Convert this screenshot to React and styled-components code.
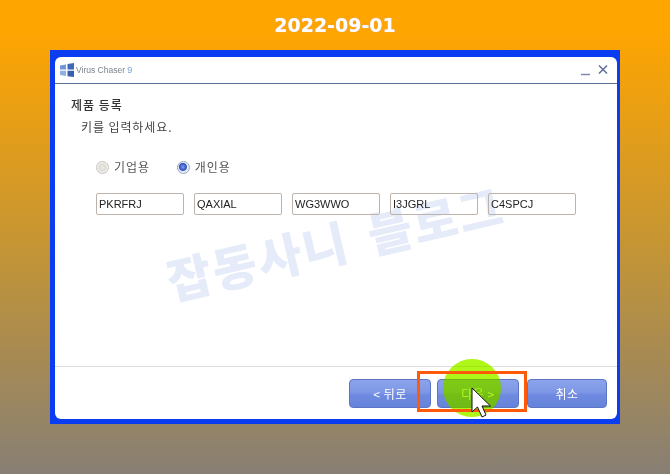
import styled, { createGlobalStyle } from 'styled-components';

const KOREAN = `"Noto Sans CJK KR", "Liberation Sans", sans-serif`;
const keys = ['PKRFRJ', 'QAXIAL', 'WG3WWO', 'I3JGRL', 'C4SPCJ'];

export default function App() {
    return (
        <Page>
            <GlobalStyle />
            <DateTitle>2022-09-01</DateTitle>
            <Frame>
                <Window>
                    <TitleBar>
                        <Logo viewBox="0 0 14 14">
                            <path d="M0 2.5 L6 1.5 V6.5 H0 Z" fill="#6f97d8" />
                            <path d="M7.5 1 L14 0 V6.5 H7.5 Z" fill="#3f68b8" />
                            <path d="M0 7.8 H6 V13 L0 12 Z" fill="#8fb0e4" />
                            <path d="M7.5 7.8 H14 V14 L7.5 13.2 Z" fill="#3560ae" />
                        </Logo>
                        <AppName>Virus Chaser <b>9</b></AppName>
                        <WindowIcons viewBox="0 0 30 14">
                            <path d="M1 11.5 H10" stroke="#7f8cab" strokeWidth="1.6" />
                            <path d="M19 2.5 L27 10.5 M27 2.5 L19 10.5" stroke="#5d6f96" strokeWidth="1.5" />
                        </WindowIcons>
                    </TitleBar>
                    <Body>
                        <Heading>제품 등록</Heading>
                        <Hint>키를 입력하세요.</Hint>
                        <RadioRow>
                            <RadioLabel>
                                <Radio />
                                기업용
                            </RadioLabel>
                            <RadioLabel>
                                <Radio $checked />
                                개인용
                            </RadioLabel>
                        </RadioRow>
                        <KeyRow>
                            {keys.map((k) => (
                                <KeyInput key={k}>{k}</KeyInput>
                            ))}
                        </KeyRow>
                        <Watermark>잡동사니 블로그</Watermark>
                    </Body>
                    <Footer>
                        <Button>&lt; 뒤로</Button>
                        <Button>다음 &gt;</Button>
                        <Button $cancel>취소</Button>
                    </Footer>
                </Window>
                <ClickSpot />
                <ClickBox />
                <Cursor viewBox="0 0 22 32">
                    <path d="M1 1 V25 L6.5 20 L11 30 L15 28 L11 19 L19.5 19 Z" fill="#fff" stroke="#111" strokeWidth="1" strokeLinejoin="round" />
                </Cursor>
            </Frame>
        </Page>
    );
}

const GlobalStyle = createGlobalStyle`
    html, body {
        margin: 0;
        padding: 0;
    }
`
const Page = styled.div`
    width: 670px;
    height: 474px;
    overflow: hidden;
    background: linear-gradient(180deg, #ffa500 0%, #ffa500 6%, #c79632 50%, #877f74 100%);
`
const DateTitle = styled.div`
    height: 50px;
    display: flex;
    align-items: center;
    justify-content: center;
    font-family: "DejaVu Sans", sans-serif;
    font-weight: 700;
    font-size: 19px;
    color: #fff;
    text-shadow: 0 0 1px #c9b4e8;
`
const Frame = styled.div`
    position: relative;
    width: 562px;
    height: 362px;
    margin-left: 50px;
    padding: 7px 3px 5px 5px;
    background: #0a3cf2;
`
const Window = styled.div`
    height: 100%;
    display: flex;
    flex-direction: column;
    background: #fff;
    border-radius: 6px;
    overflow: hidden;
`
const TitleBar = styled.div`
    height: 26px;
    flex: none;
    display: flex;
    align-items: center;
    padding: 0 7px 0 5px;
    border-bottom: 1px solid #5a7094;
`
const Logo = styled.svg`
    width: 14px;
    height: 14px;
    margin-right: 2px;
`
const AppName = styled.span`
    font-family: "Liberation Sans", sans-serif;
    font-size: 8.5px;
    color: #7a838c;
    b {
        color: #7d9fd8;
        font-size: 9px;
        font-weight: 400;
    }
`
const WindowIcons = styled.svg`
    width: 30px;
    height: 14px;
    margin-left: auto;
`
const Body = styled.div`
    position: relative;
    isolation: isolate;
    flex: 1;
    display: flex;
    flex-direction: column;
    padding: 13px 0 0 16px;
    font-family: ${KOREAN};
`
const Heading = styled.div`
    font-size: 12px;
    line-height: 16px;
    color: #333;
    font-weight: 500;
    letter-spacing: 1px;
`
const Hint = styled.div`
    margin: 6px 0 0 10px;
    font-size: 12px;
    line-height: 16px;
    color: #444;
    letter-spacing: 0.9px;
`
const RadioRow = styled.div`
    display: flex;
    gap: 27px;
    margin: 24px 0 0 25px;
`
const RadioLabel = styled.div`
    display: flex;
    align-items: center;
    gap: 5px;
    font-size: 12px;
    line-height: 16px;
    color: #555;
    letter-spacing: 0.9px;
`
const Radio = styled.span`
    width: 13px;
    height: 13px;
    box-sizing: border-box;
    border-radius: 50%;
    border: 1px solid ${(p) => (p.$checked ? '#9aa6c6' : '#c4c2bc')};
    background: ${(p) => (p.$checked
        ? 'radial-gradient(circle at 45% 45%, #7f9cf0 0, #2f50b8 3.5px, #e8ecf6 4.5px)'
        : 'radial-gradient(circle at 50% 50%, #ecebe6 0, #dcdad5 3.5px, #f5f4f0 5px)')};
`
const KeyRow = styled.div`
    display: flex;
    gap: 10px;
    margin: 18px 0 0 25px;
`
const KeyInput = styled.div`
    width: 88px;
    height: 22px;
    box-sizing: border-box;
    padding-left: 2px;
    border: 1px solid #bdb3aa;
    border-radius: 2px;
    font-family: "Liberation Sans", sans-serif;
    font-size: 11px;
    line-height: 20px;
    color: #222;
`
const Watermark = styled.div`
    position: absolute;
    z-index: -1;
    left: 108px;
    top: 129px;
    font-family: ${KOREAN};
    font-weight: 900;
    font-size: 48px;
    line-height: 56px;
    letter-spacing: 2px;
    word-spacing: 8px;
    white-space: nowrap;
    color: #e5ebf9;
    transform: rotate(-13deg);
`
const Footer = styled.div`
    height: 40px;
    flex: none;
    display: flex;
    justify-content: flex-end;
    gap: 6px;
    padding: 12px 10px 0 0;
    border-top: 1px solid #dcdcdc;
`
const Button = styled.div`
    width: ${(p) => (p.$cancel ? '80px' : '82px')};
    height: 29px;
    margin-left: ${(p) => (p.$cancel ? '2px' : '0')};
    box-sizing: border-box;
    display: flex;
    align-items: center;
    justify-content: center;
    border: 1px solid #5c74c4;
    border-radius: 4px;
    background: linear-gradient(180deg, #8ba3ea 0%, #7e98e6 45%, #6f8ae0 55%, #6583da 100%);
    font-family: ${KOREAN};
    font-size: 12px;
    letter-spacing: 0.5px;
    color: #fff;
`
const ClickSpot = styled.div`
    position: absolute;
    left: 393px;
    top: 309px;
    width: 58px;
    height: 58px;
    border-radius: 50%;
    background: rgba(170, 250, 0, 0.5);

    &::after {
        content: '';
        position: absolute;
        inset: 0;
        border-radius: 50%;
        background: rgb(210, 250, 50);
        mix-blend-mode: multiply;
    }
`
const ClickBox = styled.div`
    position: absolute;
    left: 367px;
    top: 321px;
    width: 104px;
    height: 35px;
    border: 3px solid #ff5a0a;
`
const Cursor = styled.svg`
    position: absolute;
    left: 421px;
    top: 337px;
    width: 22px;
    height: 32px;
`
